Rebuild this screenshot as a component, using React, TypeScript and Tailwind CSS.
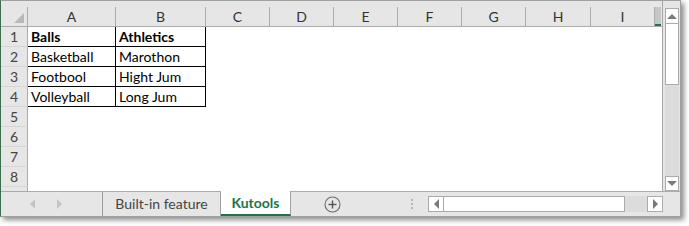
import React from "react";

const cols: { l: string; w: number }[] = [
  { l: "A", w: 88 },
  { l: "B", w: 90 },
  { l: "C", w: 64 },
  { l: "D", w: 64 },
  { l: "E", w: 64 },
  { l: "F", w: 64 },
  { l: "G", w: 64 },
  { l: "H", w: 65 },
  { l: "I", w: 64 },
];

const data: [string, string][] = [
  ["Balls", "Athletics"],
  ["Basketball", "Marothon"],
  ["Footbool", "Hight Jum"],
  ["Volleyball", "Long Jum"],
];

function Tri({ dir, color = "#7a7a7a" }: { dir: "up" | "down" | "left" | "right"; color?: string }) {
  const pts =
    dir === "up"
      ? "0,5 5,0 10,5"
      : dir === "down"
      ? "0,0 10,0 5,5"
      : dir === "left"
      ? "5,0 5,10 0,5"
      : "0,0 0,10 5,5";
  const w = dir === "up" || dir === "down" ? 10 : 5;
  const h = dir === "up" || dir === "down" ? 5 : 10;
  return (
    <svg width={w} height={h} viewBox={`0 0 ${w} ${h}`}>
      <polygon points={pts} fill={color} />
    </svg>
  );
}

export default function App() {
  const font = { fontFamily: "Lato, 'Open Sans', sans-serif" };
  return (
    <div className="w-[689px] h-[226px] bg-white overflow-hidden" style={font}>
      <div className="w-[681px] h-[217px] flex flex-col border-t border-r border-b border-[#a0a0a0] border-l border-l-[#3b6e4c] shadow-[3px_3px_5px_rgba(0,0,0,0.45)] bg-white">
        {/* main */}
        <div className="flex h-[190px]">
          <div className="w-[662px] flex flex-col border-r border-[#a6a6a6] overflow-hidden">
            {/* header */}
            <div className="flex h-[26px] shrink-0 bg-[#e6e6e6] border-b border-[#ababab] items-end">
              <div className="w-[27px] h-[19px] border-r border-[#ababab] relative">
                <svg className="absolute right-[3px] bottom-[3px]" width="10" height="10" viewBox="0 0 10 10">
                  <polygon points="10,0 10,10 0,10" fill="#b9b9b9" />
                </svg>
              </div>
              {cols.map((c) => (
                <div
                  key={c.l}
                  style={{ width: c.w }}
                  className="h-[19px] border-r border-[#ababab] text-center text-[14px] leading-[19px] text-[#333]"
                >
                  {c.l}
                </div>
              ))}
              <div className="w-[6px] h-[19px] bg-[#c6c6c6] border-b-2 border-[#217346]" />
            </div>
            {/* rows */}
            {Array.from({ length: 9 }).map((_, i) => {
              const r = data[i];
              return (
                <div key={i} className="flex h-[20px] shrink-0">
                  <div className="w-[27px] bg-[#e6e6e6] border-r border-b border-[#ababab] border-b-[#d6d6d6] text-center text-[14px] leading-[19px] text-[#444]">
                    {i < 8 ? i + 1 : ""}
                  </div>
                  {r ? (
                    <>
                      <div
                        className={`w-[88px] border-b border-r border-black pl-[3px] text-[14px] leading-[19px] text-black ${
                          i === 0 ? "font-bold" : ""
                        }`}
                      >
                        {r[0]}
                      </div>
                      <div
                        className={`w-[90px] border-b border-r border-black pl-[3px] text-[14px] leading-[19px] text-black ${
                          i === 0 ? "font-bold" : ""
                        }`}
                      >
                        {r[1]}
                      </div>
                    </>
                  ) : null}
                  <div className="flex-1" />
                </div>
              );
            })}
          </div>
          {/* vertical scrollbar */}
          <div className="flex-1 bg-[#e6e6e6] pt-[7px] pl-[2px] pr-[1px]">
            <div className="h-full bg-[#dcdcdc] flex flex-col">
              <div className="h-[16px] bg-white border border-[#ababab] flex items-center justify-center">
                <Tri dir="up" />
              </div>
              <div className="h-[61px] bg-white border border-t-0 border-[#ababab]" />
              <div className="flex-1" />
              <div className="h-[15px] bg-white border border-[#ababab] flex items-center justify-center">
                <Tri dir="down" />
              </div>
            </div>
          </div>
        </div>
        {/* tab bar */}
        <div className="flex-1 flex bg-[#e6e6e6] border-t border-[#ababab] items-stretch">
          <div className="w-[101px] shrink-0 flex items-center">
            <div className="ml-[29px]">
              <Tri dir="left" color="#c4c4c4" />
            </div>
            <div className="ml-[22px]">
              <Tri dir="right" color="#c4c4c4" />
            </div>
          </div>
          <div className="w-[119px] shrink-0 border-l border-r border-[#a0a0a0] flex items-center justify-center text-[14px] text-[#444] pb-[1px]">
            Built-in feature
          </div>
          <div className="w-[70px] shrink-0 bg-white border-r border-[#a0a0a0] -mt-[1px] border-b-2 border-b-[#217346] flex items-center justify-center text-[14px] font-bold text-[#217346]">
            Kutools
          </div>
          <div className="w-[82px] shrink-0 flex items-center justify-center">
            <svg width="17" height="17" viewBox="0 0 17 17">
              <circle cx="8.5" cy="8.5" r="7.5" fill="none" stroke="#6d6d6d" strokeWidth="1.1" />
              <line x1="8.5" y1="4.5" x2="8.5" y2="12.5" stroke="#555" strokeWidth="1.4" />
              <line x1="4.5" y1="8.5" x2="12.5" y2="8.5" stroke="#555" strokeWidth="1.4" />
            </svg>
          </div>
          <div className="w-[55px] shrink-0 flex items-center">
            <div className="ml-[38px] flex flex-col gap-[2px]">
              <div className="w-[2px] h-[2px] bg-[#b5b5b5]" />
              <div className="w-[2px] h-[2px] bg-[#b5b5b5]" />
              <div className="w-[2px] h-[2px] bg-[#b5b5b5]" />
            </div>
          </div>
          <div className="w-[235px] shrink-0 h-[16px] self-center flex bg-[#dcdcdc]">
            <div className="w-[16px] bg-white border border-[#ababab] flex items-center justify-center">
              <Tri dir="left" />
            </div>
            <div className="w-[181px] bg-white border border-l-0 border-[#ababab]" />
            <div className="flex-1" />
            <div className="w-[16px] bg-white border border-[#ababab] flex items-center justify-center">
              <Tri dir="right" />
            </div>
          </div>
        </div>
      </div>
    </div>
  );
}
